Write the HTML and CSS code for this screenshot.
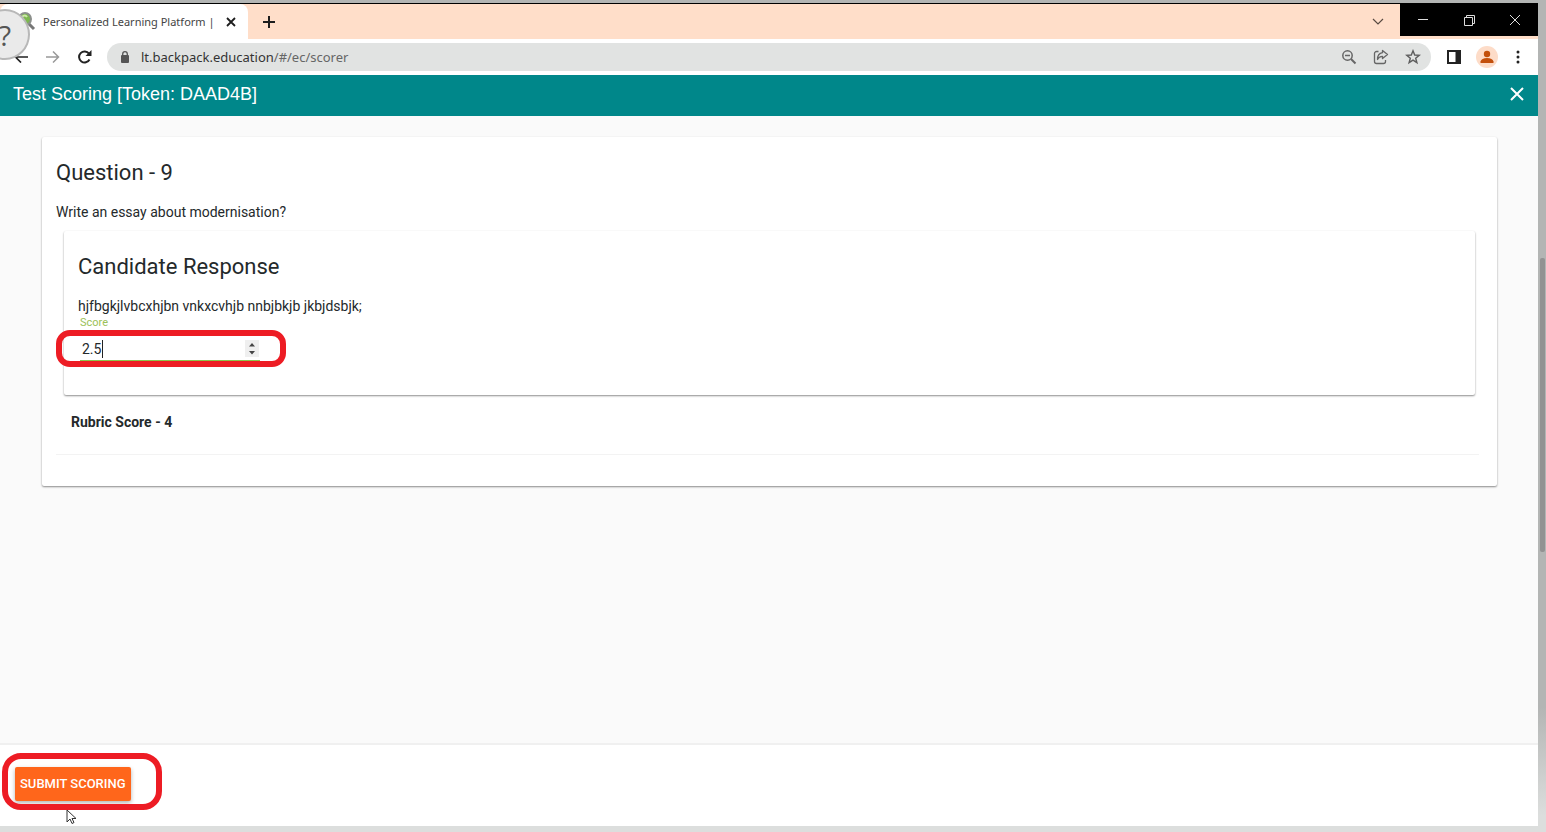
FILE: index.html
```html
<!DOCTYPE html>
<html lang="en">
<head>
<meta charset="utf-8">
<title>Personalized Learning Platform</title>
<link rel="stylesheet" href="styles.css">
</head>
<body>
<div class="desktop">
  <div class="browser">
    <header class="tab-strip">
      <div class="tab">
        <svg class="favicon" width="18" height="20" viewBox="0 0 18 20"><path d="M10 11l6 6" stroke="#777" stroke-width="3"/><circle cx="7" cy="7" r="6" fill="#7cb84f" stroke="#8b8f8b" stroke-width="2"/><path d="M4 5q3-3 5 0" stroke="#cde8a8" stroke-width="2" fill="none"/></svg>
        <span class="tab-title">Personalized Learning Platform |</span>
        <button class="icon-button tab-close" aria-label="Close tab"><svg width="10" height="10" viewBox="0 0 10 10"><path d="M1 1l8 8M9 1l-8 8" stroke="#1d1d1d" stroke-width="1.800"/></svg></button>
      </div>
      <button class="icon-button new-tab" aria-label="New tab"><svg width="12" height="12" viewBox="0 0 12 12"><path d="M6 0v12M0 6h12" stroke="#1d1d1d" stroke-width="2"/></svg></button>
      <button class="icon-button tab-search" aria-label="Search tabs"><svg width="12" height="8" viewBox="0 0 12 8"><path d="M1 1l5 5 5-5" fill="none" stroke="#594a42" stroke-width="1.2"/></svg></button>
      <div class="window-controls">
        <button class="icon-button" aria-label="Minimize"><svg width="10" height="10" viewBox="0 0 10 10"><path d="M0 4.500h10" stroke="#ddd"/></svg></button>
        <button class="icon-button" aria-label="Restore"><svg width="11" height="11" viewBox="0 0 11 11"><path d="M.5 2.500h8v8h-8zM2.500 2V.5h8v8H9" fill="none" stroke="#ddd"/></svg></button>
        <button class="icon-button" aria-label="Close"><svg width="10" height="10" viewBox="0 0 10 10"><path d="M0 0l10 10M10 0L0 10" stroke="#ddd"/></svg></button>
      </div>
    </header>
    <nav class="toolbar">
      <button class="icon-button nav-button" aria-label="Back"><svg width="14" height="12" viewBox="0 0 14 12"><path d="M14 6H1.500M7 .5L1.500 6 7 11.500" fill="none" stroke="#222" stroke-width="1.700"/></svg></button>
      <button class="icon-button nav-button" aria-label="Forward"><svg width="14" height="12" viewBox="0 0 14 12"><path d="M0 6h12.500M7 .5L12.500 6 7 11.500" fill="none" stroke="#999" stroke-width="1.500"/></svg></button>
      <button class="icon-button nav-button" aria-label="Reload"><svg width="16" height="14" viewBox="0 0 16 14"><path d="M12.500 9.500A5.500 5.500 0 1 1 12 3.700" fill="none" stroke="#222" stroke-width="2"/><path d="M14.500 0v6h-6z" fill="#222"/></svg></button>
      <div class="address-bar">
        <svg width="10" height="12" viewBox="0 0 10 12"><rect x="1" y="4" width="8" height="8" rx="1" fill="#555"/><path d="M2.700 5V3a2.300 2.300 0 0 1 4.600 0v2" fill="none" stroke="#555" stroke-width="1.300"/></svg>
        <span class="url">lt.backpack.education<span class="url-path">/#/ec/scorer</span></span>
        <button class="icon-button" aria-label="Zoom"><svg width="16" height="16" viewBox="0 0 16 16" fill="none" stroke="#666" stroke-width="1.500"><circle cx="6.500" cy="6.500" r="4.700"/><path d="M4 6.500h5"/><path d="M10 10l4.500 4.500" stroke-width="2"/></svg></button>
        <button class="icon-button" aria-label="Share"><svg width="16" height="16" viewBox="0 0 16 16" fill="none" stroke="#666" stroke-width="1.300" stroke-linejoin="round"><path d="M5.500 2.500H3.500a2 2 0 0 0-2 2v8a2 2 0 0 0 2 2h7a2 2 0 0 0 2-2v-1.500"/><path d="M9.500 1.500l5 4-5 4V7.300Q6 7.200 4.500 10.500 4.500 4.500 9.500 3.700z"/></svg></button>
        <button class="icon-button" aria-label="Bookmark"><svg width="16" height="16" viewBox="0 0 16 16"><path d="M8 1.800l1.700 4.200 4.500.3-3.500 2.900 1.200 4.500L8 11.200l-3.900 2.500 1.200-4.500L1.800 6.300 6.300 6z" fill="none" stroke="#5e5e5e" stroke-width="1.400"/></svg></button>
      </div>
      <button class="icon-button side-panel" aria-label="Side panel"><svg width="14" height="14" viewBox="0 0 14 14"><path d="M1 1h12v12H1z" fill="#fff" stroke="#222" stroke-width="2"/><path d="M8.500 0H14v14H8.500z" fill="#222"/></svg></button>
      <button class="icon-button" aria-label="Profile"><svg width="22" height="22" viewBox="0 0 22 22"><circle cx="11" cy="11" r="11" fill="#fddcc8"/><circle cx="11" cy="8" r="3.200" fill="#c3500c"/><path d="M4.500 17v-1.500Q5.500 12 11 12t6.500 3.500V17z" fill="#c3500c"/></svg></button>
      <button class="icon-button menu" aria-label="Menu"><svg width="4" height="14" viewBox="0 0 4 14" fill="#222"><circle cx="2" cy="2" r="1.500"/><circle cx="2" cy="7" r="1.500"/><circle cx="2" cy="12" r="1.500"/></svg></button>
    </nav>
    <div class="title-bar">
      <h1 class="title">Test Scoring [Token: DAAD4B]</h1>
      <button class="icon-button" aria-label="Close scoring"><svg width="14" height="14" viewBox="0 0 14 14"><path d="M1 1l12 12M13 1L1 13" stroke="#fff" stroke-width="2"/></svg></button>
    </div>
    <main class="content">
      <section class="card">
        <h2 class="heading">Question - 9</h2>
        <p class="text">Write an essay about modernisation?</p>
        <section class="card response">
          <h2 class="heading">Candidate Response</h2>
          <p class="text">hjfbgkjlvbcxhjbn vnkxcvhjb nnbjbkjb jkbjdsbjk;</p>
          <div class="field">
            <label class="field-label" for="score">Score</label>
            <input class="field-input" id="score" type="number" step="0.5" value="2.5">
            <span class="caret"></span>
            <span class="highlight highlight-score"></span>
          </div>
        </section>
        <p class="rubric">Rubric Score - 4</p>
      </section>
    </main>
    <footer class="actions">
      <div class="submit-wrap">
        <button class="submit">SUBMIT SCORING</button>
        <span class="highlight highlight-submit"></span>
        <svg class="pointer" width="11" height="16" viewBox="0 0 11 16"><path d="M1 1v12l3-3 2 4.500 2-1-2-4h4z" fill="#fff" stroke="#333"/></svg>
      </div>
    </footer>
    <button class="help" aria-label="Help">?</button>
  </div>
  <div class="scroll-thumb"></div>
</div>
</body>
</html>
```
FILE: styles.css
```css
* { box-sizing: border-box; }
body { margin: 0; font-family: Roboto, sans-serif; color: #24292b; }
h1, h2, p { margin: 0; font-weight: 400; }

.desktop {
  position: relative;
  height: 100vh;
  padding: 3px 8px 6px 0;
  overflow: hidden;
  background: linear-gradient(#b3b5b4 85%, #dcdedd 98%);
}
.browser {
  position: relative;
  display: flex;
  flex-direction: column;
  height: 100%;
  background: #fff;
}
.icon-button {
  display: flex;
  align-items: center;
  justify-content: center;
  padding: 0;
  border: 0;
  background: none;
}

.tab-strip {
  display: flex;
  flex: none;
  height: 36px;
  border-top: 1px solid #000;
  background: #ffdec9;
}
.tab {
  display: flex;
  align-items: center;
  width: 248px;
  padding: 0 12px 0 18px;
  border-radius: 8px 8px 0 0;
  background: #fff;
  font: 11px "Noto Sans", sans-serif;
  color: #444;
}
.favicon { flex: none; margin-right: 7px; }
.tab-title { flex: 1; white-space: nowrap; }
.tab-close { width: 10px; }
.new-tab { width: 42px; }
.tab-search { width: 44px; margin-left: auto; }
.window-controls { display: flex; height: 32px; background: #000; }
.window-controls .icon-button { width: 46px; }

.toolbar {
  display: flex;
  flex: none;
  align-items: center;
  gap: 10px;
  height: 36px;
  padding: 0 14px 0 10px;
}
.nav-button { width: 22px; }
.address-bar {
  display: flex;
  flex: 1;
  align-items: center;
  gap: 16px;
  height: 28px;
  padding: 0 10px 0 13px;
  margin-left: 1px;
  border-radius: 14px;
  background: #e1e3e2;
}
.url { flex: 1; margin-left: -5px; font: 13px "Noto Sans", sans-serif; color: #333; }
.url-path { color: #666; }
.side-panel { margin: 0 5px 0 6px; }
.menu { width: 12px; margin-left: 4px; }

.title-bar {
  display: flex;
  flex: none;
  align-items: center;
  justify-content: space-between;
  height: 41px;
  padding: 0 14px 3px 13px;
  background: #00878a;
  color: #fff;
}
.title { font: 18px "Liberation Sans", sans-serif; }

.content { flex: 1; padding: 21px 41px 0 42px; background: #fafafa; }
.card {
  padding: 20px 14px 31px;
  border-radius: 2px;
  background: #fff;
  box-shadow: 0 1px 2px rgba(0, 0, 0, .45);
}
.heading { font-size: 22px; line-height: 32px; }
.text { margin-top: 12px; font-size: 14px; line-height: 22px; }
.response { margin: 8px 8px 0; padding-bottom: 33px; }

.field { position: relative; width: 182px; padding-left: 2px; }
.field-label { display: block; font-size: 11px; line-height: 12px; color: #9bc158; }
.field-input {
  display: block;
  width: 100%;
  height: 33px;
  padding: 8px 1px 0 2px;
  border: 0;
  border-bottom: 2px solid #8bc34a;
  outline: 0;
  background: none;
  font: 14px Roboto, sans-serif;
  color: #24292b;
}
.field-input::-webkit-inner-spin-button {
  appearance: none;
  width: 14px;
  height: 17px;
  opacity: 1;
  background: #efefef url("data:image/svg+xml,%3Csvg xmlns='http://www.w3.org/2000/svg' width='14' height='17'%3E%3Cpath d='M4 6.500L7 3l3 3.500zM4 11l3 3.500L10 11z' fill='%23444'/%3E%3C/svg%3E") center no-repeat;
}
.caret { position: absolute; left: 24px; top: 23px; width: 1px; height: 18px; background: #222; }
.highlight { position: absolute; border: 6px solid #ed1c24; pointer-events: none; }
.highlight-score { left: -22px; top: 13px; width: 230px; height: 37px; border-radius: 14px; }

.rubric {
  margin-right: 4px;
  padding: 16px 15px 21px;
  border-bottom: 1px solid #f3f3f3;
  font-size: 14px;
  line-height: 22px;
  font-weight: 700;
}

.actions { flex: none; padding: 22px 15px 25px; border-top: 2px solid #f0f0f0; }
.submit-wrap { position: relative; width: fit-content; }
.submit {
  display: block;
  height: 34px;
  padding: 0 5px 2px;
  border: 0;
  border-radius: 2px;
  background: #ff661b;
  box-shadow: 0 2px 4px rgba(0, 0, 0, .3);
  font: 500 13px Roboto, sans-serif;
  color: #fff;
}
.highlight-submit { left: -13px; top: -14px; width: 160px; height: 57px; border-radius: 19px; }
.pointer { position: absolute; left: 51px; top: 42px; }

.help {
  position: absolute;
  left: -20px;
  top: 6px;
  width: 50px;
  height: 51px;
  padding: 0;
  border: 2px solid #b8b8b8;
  border-radius: 50%;
  background: #eaeaea;
  font: 28px "Open Sans", sans-serif;
  color: #555;
}
.scroll-thumb {
  position: absolute;
  right: 1px;
  top: 31%;
  width: 5px;
  height: 294px;
  border-radius: 2px;
  background: #929292;
}
```
